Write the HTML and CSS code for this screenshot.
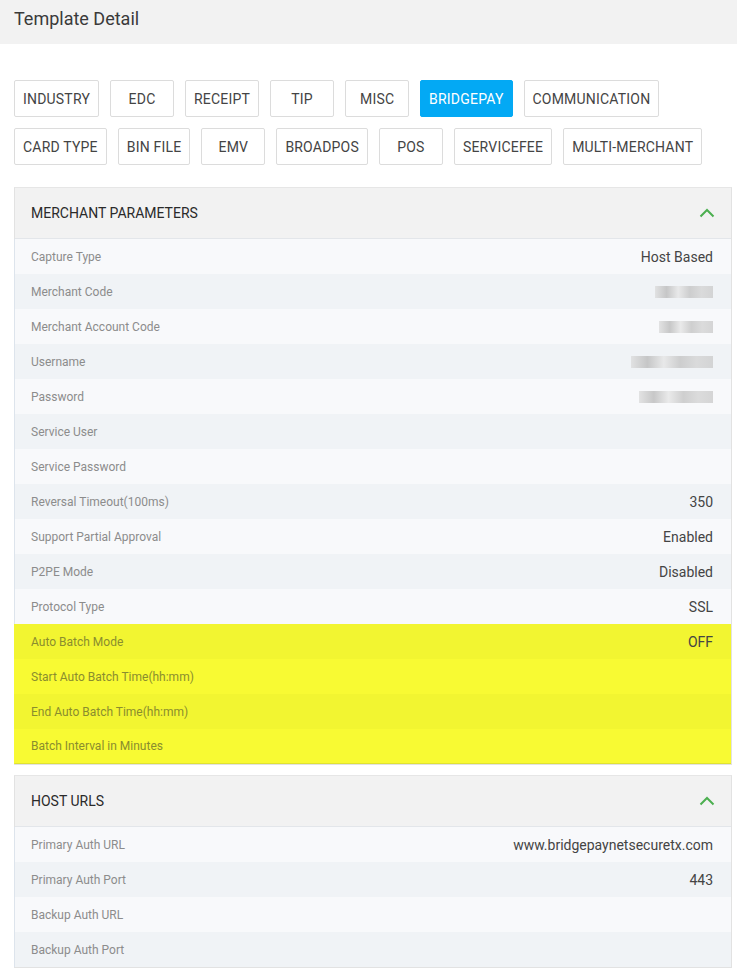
FILE: index.html
```html
<!DOCTYPE html>
<html lang="en">
  <head>
    <meta charset="UTF-8" />
    <title>Template Detail</title>
    <link rel="stylesheet" href="styles.css">
  </head>
  <body>
    <div class="page-header">Template Detail</div>

    <div class="content">
      <!-- Tabs -->
      <div class="tabs">
        <button class="tab">INDUSTRY</button>
        <button class="tab">EDC</button>
        <button class="tab">RECEIPT</button>
        <button class="tab">TIP</button>
        <button class="tab">MISC</button>
        <button class="tab active">BRIDGEPAY</button>
        <button class="tab">COMMUNICATION</button>
        <button class="tab">CARD TYPE</button>
        <button class="tab">BIN FILE</button>
        <button class="tab">EMV</button>
        <button class="tab">BROADPOS</button>
        <button class="tab">POS</button>
        <button class="tab">SERVICEFEE</button>
        <button class="tab">MULTI-MERCHANT</button>
      </div>

      <!-- Merchant Parameters -->
      <div class="panel">
        <div class="panel-header">
          MERCHANT PARAMETERS
          <svg class="chevron" width="16" height="10" viewBox="0 0 16 10"><path d="M1.5 8.5 L8 2 L14.5 8.5" fill="none" stroke="#4caf50" stroke-width="2"/></svg>
        </div>
        <div class="row"><span class="label">Capture Type</span><span class="value">Host Based</span></div>
        <div class="row"><span class="label">Merchant Code</span><span class="blur" style="width:58px"></span></div>
        <div class="row"><span class="label">Merchant Account Code</span><span class="blur" style="width:54px"></span></div>
        <div class="row"><span class="label">Username</span><span class="blur" style="width:82px"></span></div>
        <div class="row"><span class="label">Password</span><span class="blur" style="width:74px"></span></div>
        <div class="row"><span class="label">Service User</span><span class="value"></span></div>
        <div class="row"><span class="label">Service Password</span><span class="value"></span></div>
        <div class="row"><span class="label">Reversal Timeout(100ms)</span><span class="value">350</span></div>
        <div class="row"><span class="label">Support Partial Approval</span><span class="value">Enabled</span></div>
        <div class="row"><span class="label">P2PE Mode</span><span class="value">Disabled</span></div>
        <div class="row"><span class="label">Protocol Type</span><span class="value">SSL</span></div>
        <div class="row highlight"><span class="label">Auto Batch Mode</span><span class="value">OFF</span></div>
        <div class="row highlight"><span class="label">Start Auto Batch Time(hh:mm)</span><span class="value"></span></div>
        <div class="row highlight"><span class="label">End Auto Batch Time(hh:mm)</span><span class="value"></span></div>
        <div class="row highlight last"><span class="label">Batch Interval in Minutes</span><span class="value"></span></div>
      </div>

      <!-- Host URLs -->
      <div class="panel">
        <div class="panel-header">
          HOST URLS
          <svg class="chevron" width="16" height="10" viewBox="0 0 16 10"><path d="M1.5 8.5 L8 2 L14.5 8.5" fill="none" stroke="#4caf50" stroke-width="2"/></svg>
        </div>
        <div class="row"><span class="label">Primary Auth URL</span><span class="value">www.bridgepaynetsecuretx.com</span></div>
        <div class="row"><span class="label">Primary Auth Port</span><span class="value">443</span></div>
        <div class="row"><span class="label">Backup Auth URL</span><span class="value"></span></div>
        <div class="row"><span class="label">Backup Auth Port</span><span class="value"></span></div>
      </div>
    </div>
  </body>
</html>
```

FILE: styles.css
```css
body {
  font-family: Roboto, "Liberation Sans", sans-serif;
  background: #ffffff;
  margin: 0;
  padding: 0;
  color: #444;
}

.page-header {
  background: #f2f2f2;
  height: 44px;
  line-height: 38px;
  padding-left: 14px;
  font-size: 18px;
  color: #3a3a3a;
}

.content {
  padding: 36px 5px 0 14px;
}

/* Tabs */
.tabs {
  display: flex;
  flex-wrap: wrap;
  gap: 11px;
  width: 700px;
}

.tab {
  height: 37px;
  min-width: 64px;
  padding: 0 8px;
  font-family: Roboto, "Liberation Sans", sans-serif;
  font-size: 14px;
  letter-spacing: 0.2px;
  color: #444;
  background: #fff;
  border: 1px solid #dcdcdc;
  border-radius: 2px;
  cursor: pointer;
}

.tab.active {
  background: #03a9f4;
  border-color: #03a9f4;
  color: #fff;
}

/* Panels */
.panel {
  margin-top: 22px;
  border: 1px solid #e2e2e2;
  border-top: 1px solid #e6e6e6;
}

.panel + .panel {
  margin-top: 10px;
}

.panel-header {
  background: #f2f2f2;
  height: 50px;
  padding: 0 16px;
  display: flex;
  justify-content: space-between;
  align-items: center;
  font-size: 14px;
  color: #2a2a2a;
  border-bottom: 1px solid #e3e6ea;
}

.row {
  height: 35px;
  display: flex;
  justify-content: space-between;
  align-items: center;
  padding: 0 18px 0 16px;
  background: #f8f9fb;
  border-left: 1px solid #dde4ec;
  margin-left: -1px;
}

.row:nth-child(odd) {
  background: #f0f3f6;
}

.label {
  font-size: 12px;
  color: #8c8c8c;
}

.value {
  font-size: 14px;
  color: #444;
}

.blur {
  height: 12px;
  background: linear-gradient(90deg, #ddd, #bbb 20%, #e6e6e6 40%, #c4c4c4 60%, #d4d4d4 80%, #ccc);
  opacity: 0.8;
}

.row.highlight {
  background: #f8fa33;
  border-left-color: #f8fa33;
}

.row.highlight:nth-child(odd) {
  background: #f2f531;
  border-left-color: #f2f531;
}

.row.highlight .label {
  color: #8a8d2e;
}

.row.last {
  border-bottom: 1px solid #e0e232;
  height: 34px;
}
```
